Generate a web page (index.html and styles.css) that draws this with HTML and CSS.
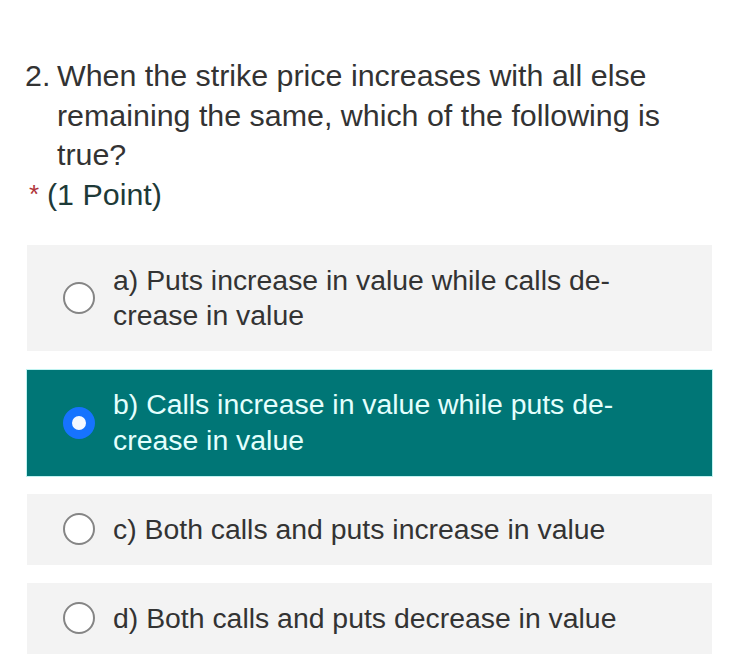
FILE: index.html
```html
<!DOCTYPE html>
<html>
<head>
<meta charset="utf-8">
<link rel="stylesheet" href="styles.css">
</head>
<body>
<div class="page">
  <div class="question">
    <span class="num">2.</span>
    <span class="qtext">When the strike price increases with all else remaining the same, which of the following is true?</span>
  </div>
  <div class="points"><span class="req">*</span><span class="pt">(1 Point)</span></div>
  <div class="options">
    <div class="option">
      <span class="radio"></span>
      <span class="label">a) Puts increase in value while calls de-<br>crease in value</span>
    </div>
    <div class="option selected">
      <span class="radio"></span>
      <span class="label">b) Calls increase in value while puts de-<br>crease in value</span>
    </div>
    <div class="option">
      <span class="radio"></span>
      <span class="label">c) Both calls and puts increase in value</span>
    </div>
    <div class="option">
      <span class="radio"></span>
      <span class="label">d) Both calls and puts decrease in value</span>
    </div>
  </div>
</div>
</body>
</html>
```
FILE: styles.css
```css
html, body {
  margin: 0;
  padding: 0;
  background: #ffffff;
}
.page {
  font-family: "Liberation Sans", Arial, sans-serif;
  padding-top: 56px;
  width: 739px;
  height: 665px;
  box-sizing: border-box;
  overflow: hidden;
}
.question {
  display: flex;
  padding-left: 25px;
  width: 670px;
  font-size: 30.4px;
  line-height: 39.5px;
  color: #333333;
}
.num {
  flex: 0 0 32px;
}
.qtext {
  flex: 1;
}
.points {
  display: flex;
  padding-left: 29px;
  font-size: 30.4px;
  line-height: 39.5px;
}
.req {
  color: #b0343a;
  width: 18px;
  font-size: 26px;
}
.pt {
  color: #1e3a38;
}
.options {
  margin-top: 31px;
  margin-left: 27px;
  width: 685px;
  display: flex;
  flex-direction: column;
  gap: 18.5px;
}
.option {
  display: flex;
  align-items: center;
  background: #f3f3f3;
  padding: 17.5px 0 17.5px 36px;
  font-size: 28.4px;
  line-height: 35.5px;
  color: #333333;
}
.option.selected {
  background: #007676;
  color: #e4fffd;
  box-shadow: 0 0 0 1px #bff3f1;
}
.radio {
  flex: 0 0 auto;
  box-sizing: border-box;
  width: 32px;
  height: 32px;
  border: 2.5px solid #858585;
  border-radius: 50%;
  background: #ffffff;
  margin-right: 18px;
}
.selected .radio {
  border: 9px solid #1673ff;
  background: #f5f8ff;
}
.label {
  display: block;
}
```
